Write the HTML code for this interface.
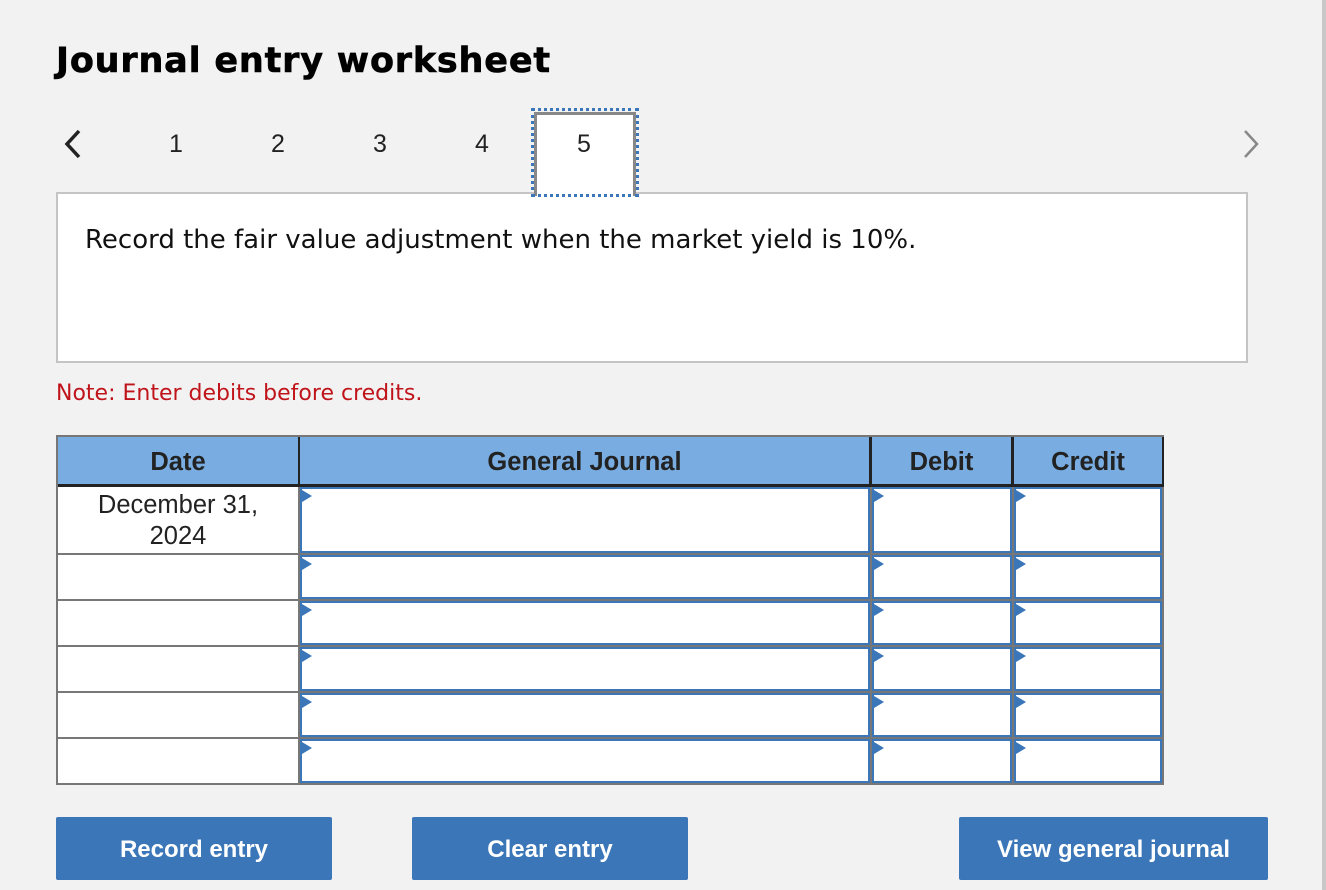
<!DOCTYPE html>
<html><head><style>
body{margin:0;width:1326px;height:890px;background:#f2f2f2;position:relative;overflow:hidden;font-family:"Liberation Sans",Arial,sans-serif}
.a{position:absolute}
h1{position:absolute;left:56px;top:41px;margin:0;font-family:"DejaVu Sans",sans-serif;font-weight:bold;font-size:35px;letter-spacing:0.8px;color:#000;-webkit-text-stroke:0.6px #000}
.n{font-size:25px;color:#222;top:130px}
.c{position:absolute;background:#fff;box-sizing:border-box}
.in{position:absolute;background:#fff;border:2px solid #3a76b8;box-sizing:border-box}
.in:before{content:"";position:absolute;left:0;top:1px;border-left:10px solid #3a76b8;border-top:6px solid transparent;border-bottom:6px solid transparent}
.th{position:absolute;top:437px;height:49px;background:#79ade1;font-weight:bold;font-size:25.5px;color:#222;text-align:center;line-height:51px;box-sizing:border-box}
.btn{position:absolute;top:817px;height:63px;background:#3a76b8;color:#fff;font-weight:bold;font-size:24px;text-align:center;line-height:65px;border-radius:2px}
</style></head><body>
<div class="a" style="left:1322px;top:0;width:4px;height:890px;background:#c8c8c8"></div>
<h1>Journal entry worksheet</h1>
<svg class="a" style="left:60px;top:128px" width="24" height="32"><path d="M19 3 L7 16 L19 29" stroke="#222" stroke-width="3.5" fill="none"/></svg>
<svg class="a" style="left:1240px;top:128px" width="24" height="32"><path d="M5 3 L17 16 L5 29" stroke="#888" stroke-width="2.5" fill="none"/></svg>
<div class="a n" style="left:169px">1</div>
<div class="a n" style="left:271px">2</div>
<div class="a n" style="left:373px">3</div>
<div class="a n" style="left:475px">4</div>
<div class="a" style="left:56px;top:192px;width:1192px;height:171px;background:#fff;border:2px solid #c4c4c4;box-sizing:border-box"></div>
<div class="a" style="left:534px;top:112px;width:102px;height:84px;background:#fff;border:3px solid #888;border-bottom:none;box-sizing:border-box"></div>
<div class="a" style="left:531px;top:108px;width:108px;height:89px;border:3px dotted #3a76b8;box-sizing:border-box"></div>
<div class="a n" style="left:577px">5</div>
<div class="a" style="left:85px;top:225px;font-family:'DejaVu Sans',sans-serif;font-size:26px;color:#111">Record the fair value adjustment when the market yield is 10%.</div>
<div class="a" style="left:56px;top:381px;font-family:'DejaVu Sans',sans-serif;font-size:22px;color:#c0141b">Note: Enter debits before credits.</div>
<div class="a" style="left:56px;top:435px;width:1108px;height:350px;background:#777"></div>
<div class="th" style="left:58px;width:240px">Date</div>
<div class="th" style="left:300px;width:569px">General Journal</div>
<div class="th" style="left:872px;width:139px">Debit</div>
<div class="th" style="left:1014px;width:148px">Credit</div>
<div class="a" style="left:298px;top:437px;width:2px;height:49px;background:#222"></div>
<div class="a" style="left:869px;top:437px;width:3px;height:49px;background:#222"></div>
<div class="a" style="left:1011px;top:437px;width:3px;height:49px;background:#222"></div>
<div class="a" style="left:58px;top:484px;width:1104px;height:3px;background:#222"></div>
<div class="a" style="left:1162px;top:437px;width:2px;height:50px;background:#222"></div>

<div class="c" style="left:58px;top:487px;width:240px;height:66px;text-align:center;font-size:25.5px;color:#222;line-height:31px;padding-top:3px">December 31,<br>2024</div>
<div class="in" style="left:300px;top:487px;width:570px;height:66px"></div>
<div class="in" style="left:872px;top:487px;width:140px;height:66px"></div>
<div class="in" style="left:1014px;top:487px;width:148px;height:66px"></div>

<div class="c" style="left:58px;top:555px;width:240px;height:44px"></div>
<div class="in" style="left:300px;top:555px;width:570px;height:44px"></div>
<div class="in" style="left:872px;top:555px;width:140px;height:44px"></div>
<div class="in" style="left:1014px;top:555px;width:148px;height:44px"></div>

<div class="c" style="left:58px;top:601px;width:240px;height:44px"></div>
<div class="in" style="left:300px;top:601px;width:570px;height:44px"></div>
<div class="in" style="left:872px;top:601px;width:140px;height:44px"></div>
<div class="in" style="left:1014px;top:601px;width:148px;height:44px"></div>

<div class="c" style="left:58px;top:647px;width:240px;height:44px"></div>
<div class="in" style="left:300px;top:647px;width:570px;height:44px"></div>
<div class="in" style="left:872px;top:647px;width:140px;height:44px"></div>
<div class="in" style="left:1014px;top:647px;width:148px;height:44px"></div>

<div class="c" style="left:58px;top:693px;width:240px;height:44px"></div>
<div class="in" style="left:300px;top:693px;width:570px;height:44px"></div>
<div class="in" style="left:872px;top:693px;width:140px;height:44px"></div>
<div class="in" style="left:1014px;top:693px;width:148px;height:44px"></div>

<div class="c" style="left:58px;top:739px;width:240px;height:44px"></div>
<div class="in" style="left:300px;top:739px;width:570px;height:44px"></div>
<div class="in" style="left:872px;top:739px;width:140px;height:44px"></div>
<div class="in" style="left:1014px;top:739px;width:148px;height:44px"></div>

<div class="btn" style="left:56px;width:276px">Record entry</div>
<div class="btn" style="left:412px;width:276px">Clear entry</div>
<div class="btn" style="left:959px;width:309px">View general journal</div>
</body></html>
